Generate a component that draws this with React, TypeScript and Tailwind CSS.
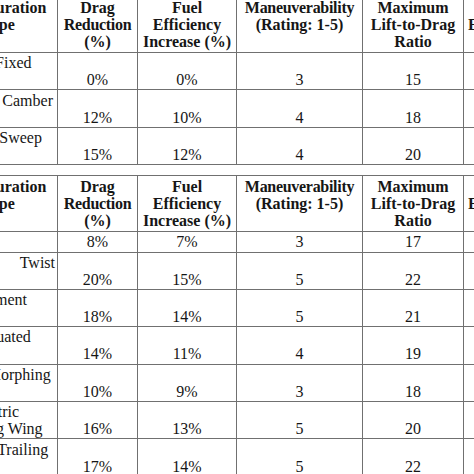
import React from 'react';

// Two stacked comparison tables, cropped on both sides like the source scan.

type Row = {
  name: string[];
  inset: string; // horizontal nudge of the first column so the cropped words land where the scan has them
  justify?: boolean; // first line spread across the cell, as justified text
  drag: string;
  fuel: string;
  man: string;
  ld: string;
  end: string;
};

const TOP_ROWS: Row[] = [
  { name: ['Baseline Fixed', 'Wing'], inset: '-ml-[3px]', drag: '0%', fuel: '0%', man: '3', ld: '15', end: '0%' },
  { name: ['Variable Camber', 'Wing'], inset: 'ml-[6px]', drag: '12%', fuel: '10%', man: '4', ld: '18', end: '8%' },
  { name: ['Variable Sweep', 'Wing'], inset: 'ml-[3px]', drag: '15%', fuel: '12%', man: '4', ld: '20', end: '10%' },
];

const BOTTOM_ROWS: Row[] = [
  { name: ['Winglet'], inset: 'ml-0', drag: '8%', fuel: '7%', man: '3', ld: '17', end: '5%' },
  { name: ['Adaptive Twist', 'Control'], inset: 'ml-0', justify: true, drag: '20%', fuel: '15%', man: '5', ld: '22', end: '14%' },
  { name: ['Displacement', 'Control'], inset: 'ml-0', drag: '18%', fuel: '14%', man: '5', ld: '21', end: '12%' },
  { name: ['Self-Actuated', 'Flaps'], inset: 'ml-[3px]', drag: '14%', fuel: '11%', man: '4', ld: '19', end: '9%' },
  { name: ['Active Morphing', 'Skin'], inset: 'ml-[1px]', drag: '10%', fuel: '9%', man: '3', ld: '18', end: '7%' },
  { name: ['Asymmetric', 'Morphing Wing'], inset: 'ml-[1px]', drag: '16%', fuel: '13%', man: '5', ld: '20', end: '11%' },
  { name: ['Flexible Trailing', 'Edge'], inset: 'ml-[2px]', drag: '17%', fuel: '14%', man: '5', ld: '22', end: '12%' },
];

const cell = 'border border-[#707070] leading-[17px]';
const head = `${cell} py-[2px] px-0 align-top text-center`;
const body = `${cell} py-[1.2px] px-0`;

function Header() {
  return (
    <thead>
      <tr className="font-bold">
        <th className={head}>
          <div>Configuration</div>
          <div>Type</div>
        </th>
        <th className={head}>
          <div>Drag</div>
          <div className="tracking-[-0.3px]">Reduction</div>
          <div>(%)</div>
        </th>
        <th className={head}>
          <div>Fuel</div>
          <div>Efficiency</div>
          <div>Increase (%)</div>
        </th>
        <th className={head}>
          <div className="tracking-[-0.3px]">Maneuverability</div>
          <div>(Rating: 1-5)</div>
        </th>
        <th className={head}>
          <div>Maximum</div>
          <div>Lift-to-Drag</div>
          <div>Ratio</div>
        </th>
        <th className={`${cell} py-[2px] pl-[4px] align-middle text-left whitespace-nowrap`}>Endurance</th>
      </tr>
    </thead>
  );
}

function NameCell({ row }: { row: Row }) {
  return (
    <td className={`${body} align-top`}>
      {row.name.map((line, j) =>
        row.justify && j === 0 ? (
          <div key={j} className="flex justify-between whitespace-nowrap pr-[2px]">
            {line.split(' ').map((w, k) => (
              <span key={k}>{w}</span>
            ))}
          </div>
        ) : (
          <div key={j} className={`whitespace-nowrap ${row.inset}`}>{line}</div>
        ),
      )}
    </td>
  );
}

function DataTable({ rows, className }: { rows: Row[]; className?: string }) {
  return (
    <table className={`table-fixed border-collapse w-[625px] ml-[-62px] text-[16px] text-[#161616] ${className ?? ''}`}>
      <colgroup>
        <col className="w-[119px]" />
        <col className="w-[80px]" />
        <col className="w-[99px]" />
        <col className="w-[126px]" />
        <col className="w-[101px]" />
        <col className="w-[100px]" />
      </colgroup>
      <Header />
      <tbody>
        {rows.map((r, i) => (
          <tr key={i}>
            <NameCell row={r} />
            <td className={`${body} align-bottom text-center`}>{r.drag}</td>
            <td className={`${body} align-bottom text-center`}>{r.fuel}</td>
            <td className={`${body} align-bottom text-center`}>{r.man}</td>
            <td className={`${body} align-bottom text-center`}>{r.ld}</td>
            <td className={`${body} align-bottom text-center`}>{r.end}</td>
          </tr>
        ))}
      </tbody>
    </table>
  );
}

export default function App() {
  return (
    <div className="w-[474px] h-[474px] overflow-hidden bg-white font-['Liberation_Serif',serif]">
      <div className="flex flex-col">
        <DataTable rows={TOP_ROWS} className="mt-[-4px]" />
        <DataTable rows={BOTTOM_ROWS} className="mt-[10px]" />
      </div>
    </div>
  );
}
